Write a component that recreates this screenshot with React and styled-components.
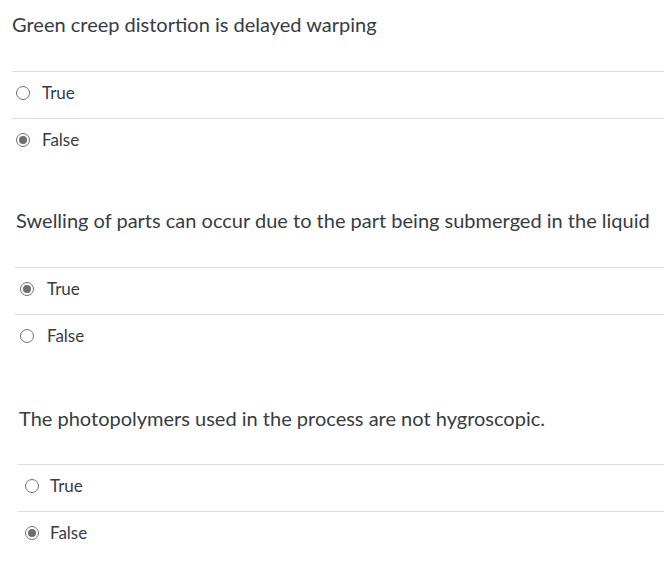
import React from 'react';
import styled, { createGlobalStyle } from 'styled-components';

const GlobalStyle = createGlobalStyle`
  html, body {
    margin: 0;
    padding: 0;
    background: #ffffff;
  }
  body {
    font-family: Lato, "Liberation Sans", Arial, sans-serif;
    color: #2d3b45;
  }
`;

const Page = styled.div`
  width: 664px;
  height: 569px;
  overflow: hidden;
  background: #fff;
`;

const Question = styled.section`
  margin-left: ${({ indent }) => indent}px;
  margin-top: ${({ top }) => top}px;
`;

const Title = styled.div`
  height: 30px;
  line-height: 30px;
  font-size: 20px;
  padding-left: ${({ pad }) => pad}px;
  white-space: nowrap;
  color: #363c42;
`;

const Answers = styled.ul`
  list-style: none;
  margin: ${({ gap }) => gap}px 0 0;
  padding: 0;
`;

const Row = styled.li`
  box-sizing: border-box;
  display: flex;
  align-items: center;
  gap: ${({ space }) => space}px;
  height: 47px;
  padding: 0 0 5px ${({ pad }) => pad}px;
  border-top: 1px solid #dcdcdc;
  font-size: 17px;
  color: #363c42;
`;

const Radio = styled.span`
  box-sizing: border-box;
  width: 14px;
  height: 14px;
  border-radius: 50%;
  border: 1px solid #707070;
  background: #fff;
  display: flex;
  align-items: center;
  justify-content: center;
  flex-shrink: 0;

  &::after {
    content: '';
    width: 8px;
    height: 8px;
    border-radius: 50%;
    background: ${({ checked }) => (checked ? '#6e6e6e' : 'transparent')};
  }
`;

const questions = [
  {
    text: 'Green creep distortion is delayed warping',
    answer: 'False',
    indent: 12,
    top: 9,
    titlePad: 0,
    rowPad: 4,
    space: 12,
    gap: 32,
  },
  {
    text: 'Swelling of parts can occur due to the part being submerged in the liquid',
    answer: 'True',
    indent: 15,
    top: 40,
    titlePad: 1,
    rowPad: 5,
    space: 13,
    gap: 32,
  },
  {
    text: 'The photopolymers used in the process are not hygroscopic.',
    answer: 'False',
    indent: 18,
    top: 42,
    titlePad: 1,
    rowPad: 7,
    space: 11,
    gap: 31,
  },
];

export default function App() {
  return (
    <Page>
      <GlobalStyle />
      {questions.map((q) => (
        <Question key={q.text} indent={q.indent} top={q.top}>
          <Title pad={q.titlePad}>{q.text}</Title>
          <Answers gap={q.gap}>
            {['True', 'False'].map((opt) => (
              <Row key={opt} pad={q.rowPad} space={q.space}>
                <Radio checked={opt === q.answer} />
                {opt}
              </Row>
            ))}
          </Answers>
        </Question>
      ))}
    </Page>
  );
}
